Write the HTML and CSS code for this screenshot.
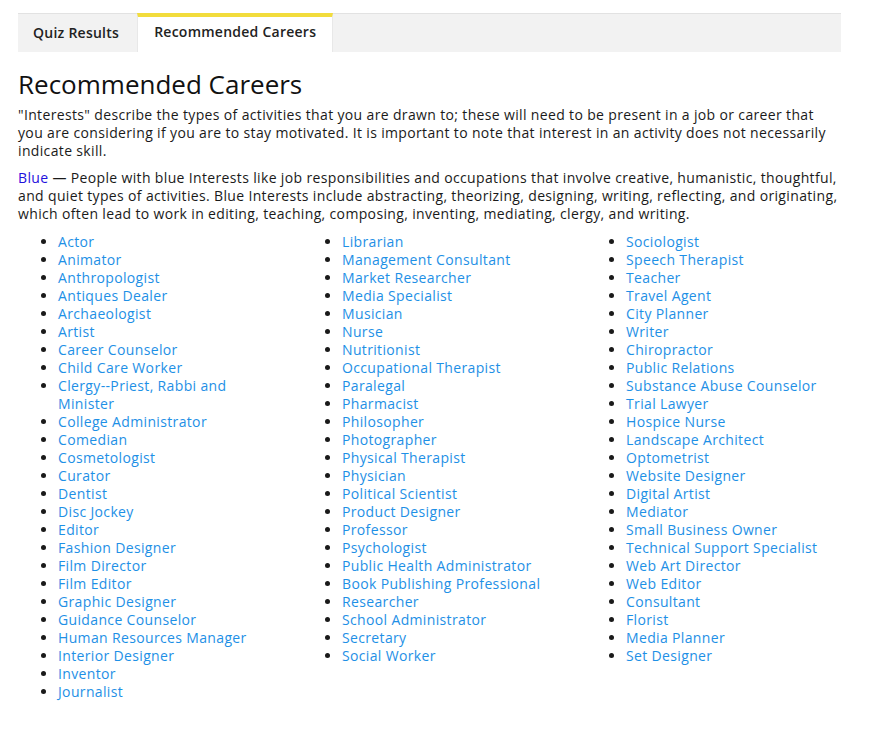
FILE: index.html
```html
<!DOCTYPE html>
<html lang="en">
<head>
  <meta charset="UTF-8" />
  <meta name="viewport" content="width=device-width, initial-scale=1" />
  <title>Recommended Careers</title>
  <link rel="stylesheet" href="styles.css">
</head>
<body>

<div class="tabs">
  <div class="tab">Quiz Results</div>
  <div class="tab active">Recommended Careers</div>
</div>

<h1>Recommended Careers</h1>

<p>"Interests" describe the types of activities that you are drawn to; these will need to be present in a job or career that you are considering if you are to stay motivated. It is important to note that interest in an activity does not necessarily indicate skill.</p>

<p><span class="color-name">Blue</span> — People with blue Interests like job responsibilities and occupations that involve creative, humanistic, thoughtful, and quiet types of activities. Blue Interests include abstracting, theorizing, designing, writing, reflecting, and originating, which often lead to work in editing, teaching, composing, inventing, mediating, clergy, and writing.</p>

<div class="careers">
  <ul>
    <li><a href="#">Actor</a></li>
    <li><a href="#">Animator</a></li>
    <li><a href="#">Anthropologist</a></li>
    <li><a href="#">Antiques Dealer</a></li>
    <li><a href="#">Archaeologist</a></li>
    <li><a href="#">Artist</a></li>
    <li><a href="#">Career Counselor</a></li>
    <li><a href="#">Child Care Worker</a></li>
    <li><a href="#">Clergy--Priest, Rabbi and Minister</a></li>
    <li><a href="#">College Administrator</a></li>
    <li><a href="#">Comedian</a></li>
    <li><a href="#">Cosmetologist</a></li>
    <li><a href="#">Curator</a></li>
    <li><a href="#">Dentist</a></li>
    <li><a href="#">Disc Jockey</a></li>
    <li><a href="#">Editor</a></li>
    <li><a href="#">Fashion Designer</a></li>
    <li><a href="#">Film Director</a></li>
    <li><a href="#">Film Editor</a></li>
    <li><a href="#">Graphic Designer</a></li>
    <li><a href="#">Guidance Counselor</a></li>
    <li><a href="#">Human Resources Manager</a></li>
    <li><a href="#">Interior Designer</a></li>
    <li><a href="#">Inventor</a></li>
    <li><a href="#">Journalist</a></li>
  </ul>
  <ul>
    <li><a href="#">Librarian</a></li>
    <li><a href="#">Management Consultant</a></li>
    <li><a href="#">Market Researcher</a></li>
    <li><a href="#">Media Specialist</a></li>
    <li><a href="#">Musician</a></li>
    <li><a href="#">Nurse</a></li>
    <li><a href="#">Nutritionist</a></li>
    <li><a href="#">Occupational Therapist</a></li>
    <li><a href="#">Paralegal</a></li>
    <li><a href="#">Pharmacist</a></li>
    <li><a href="#">Philosopher</a></li>
    <li><a href="#">Photographer</a></li>
    <li><a href="#">Physical Therapist</a></li>
    <li><a href="#">Physician</a></li>
    <li><a href="#">Political Scientist</a></li>
    <li><a href="#">Product Designer</a></li>
    <li><a href="#">Professor</a></li>
    <li><a href="#">Psychologist</a></li>
    <li><a href="#">Public Health Administrator</a></li>
    <li><a href="#">Book Publishing Professional</a></li>
    <li><a href="#">Researcher</a></li>
    <li><a href="#">School Administrator</a></li>
    <li><a href="#">Secretary</a></li>
    <li><a href="#">Social Worker</a></li>
  </ul>
  <ul>
    <li><a href="#">Sociologist</a></li>
    <li><a href="#">Speech Therapist</a></li>
    <li><a href="#">Teacher</a></li>
    <li><a href="#">Travel Agent</a></li>
    <li><a href="#">City Planner</a></li>
    <li><a href="#">Writer</a></li>
    <li><a href="#">Chiropractor</a></li>
    <li><a href="#">Public Relations</a></li>
    <li><a href="#">Substance Abuse Counselor</a></li>
    <li><a href="#">Trial Lawyer</a></li>
    <li><a href="#">Hospice Nurse</a></li>
    <li><a href="#">Landscape Architect</a></li>
    <li><a href="#">Optometrist</a></li>
    <li><a href="#">Website Designer</a></li>
    <li><a href="#">Digital Artist</a></li>
    <li><a href="#">Mediator</a></li>
    <li><a href="#">Small Business Owner</a></li>
    <li><a href="#">Technical Support Specialist</a></li>
    <li><a href="#">Web Art Director</a></li>
    <li><a href="#">Web Editor</a></li>
    <li><a href="#">Consultant</a></li>
    <li><a href="#">Florist</a></li>
    <li><a href="#">Media Planner</a></li>
    <li><a href="#">Set Designer</a></li>
  </ul>
</div>

</body>
</html>
```

FILE: styles.css
```css
body {
  font-family: 'Open Sans', 'Liberation Sans', sans-serif;
  font-size: 14px;
  line-height: 18px;
  letter-spacing: 0.35px;
  color: #1a1a1a;
  background: #fff;
  margin: 0;
  padding: 13px 41px 20px 18px;
}

.tabs {
  display: flex;
  height: 38px;
  background: #f2f2f2;
  border-top: 1px solid #e2e2e2;
}
.tab {
  padding: 0 18px 0 15px;
  line-height: 38px;
  font-weight: 600;
  letter-spacing: 0.25px;
  color: #222;
}
.tab.active {
  background: #fff;
  border-top: 4px solid #f2dc3c;
  border-left: 1px solid #e8e8e8;
  border-right: 1px solid #e8e8e8;
  margin-top: -1px;
  line-height: 30px;
  padding: 0 16px 5px;
}

h1 {
  font-size: 26px;
  font-weight: 400;
  line-height: 32px;
  letter-spacing: 0;
  margin: 16px 0 6px;
  color: #111;
}

p {
  margin: 0 0 9px;
}

.color-name {
  color: #1f10dd;
}

.careers {
  display: grid;
  grid-template-columns: 284px 284px 284px;
  margin-top: 10px;
}
.careers ul {
  margin: 0;
  padding: 0 40px;
}
.careers a {
  color: #1e90e6;
  text-decoration: none;
}
```
